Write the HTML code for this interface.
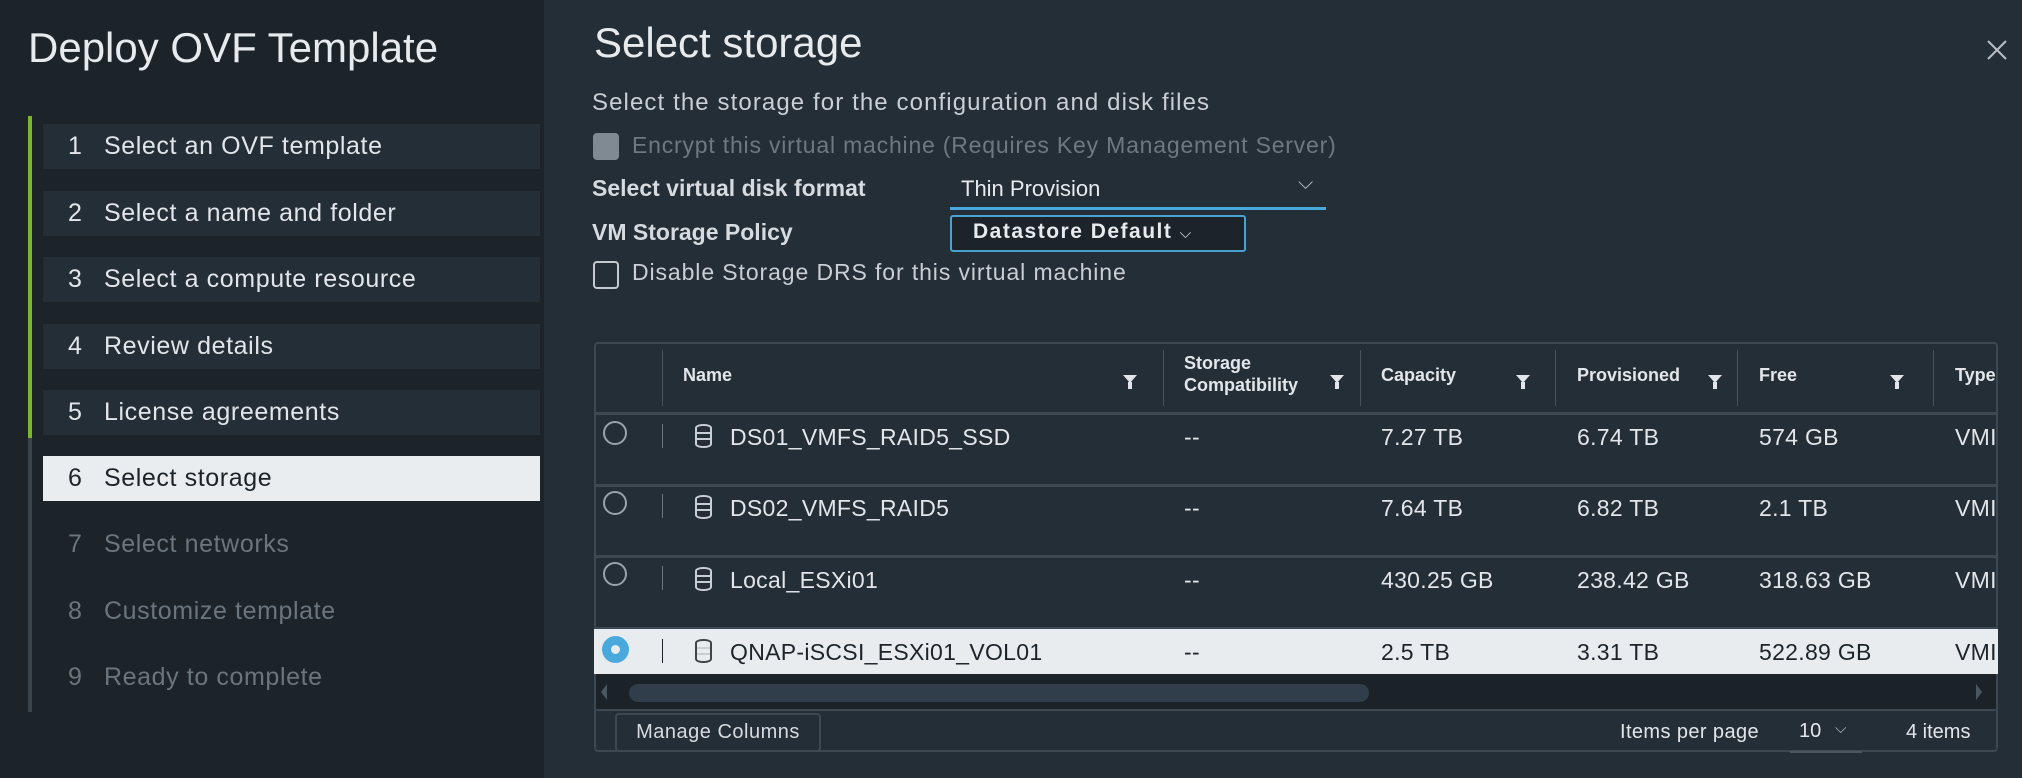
<!DOCTYPE html>
<html><head><meta charset="utf-8"><style>
*{margin:0;padding:0;box-sizing:border-box}
body{width:2022px;height:778px;overflow:hidden;background:#242e36;font-family:"Liberation Sans",sans-serif;color:#e2e6ea;position:relative}
.a{position:absolute;white-space:nowrap}
#side{position:absolute;left:0;top:0;width:544px;height:778px;background:#1c242a}
.step{position:absolute;left:43px;width:497px;height:45px;background:#242e37;font-size:25px;letter-spacing:0.6px;line-height:45px;color:#e2e6ea}
.step .n{position:absolute;left:25px}
.step .t{position:absolute;left:61px}
.step.dis{background:none;color:#6b757d}
.step.sel{background:#e9edf0;color:#1c242a}
.hd{font-weight:bold;font-size:18px;color:#e2e6ea}
.cell{font-size:23px;letter-spacing:0.3px}
.sel2{color:#1c242a}
.vl{position:absolute;width:1px;background:#46525c}
.hl{position:absolute;left:594px;width:1404px;height:3px;background:#3d4852}
.radio{position:absolute;width:24px;height:24px;border:2px solid #9aa3aa;border-radius:50%}
.filt{position:absolute;width:0;height:0;border-left:7px solid transparent;border-right:7px solid transparent;border-top:8px solid #e2e6ea}
.filt:after{content:"";position:absolute;left:-2px;top:-1px;width:4px;height:7px;background:#e2e6ea}
.db{position:absolute;width:17px;height:24px;border:2px solid #c8ced3;border-radius:8px/4px}
.db:before,.db:after{content:"";position:absolute;left:0;right:0;height:2px;background:#c8ced3}
.db:before{top:6px}.db:after{top:12px}
</style></head><body>
<div id="side">
<div class="a" style="left:28px;top:24px;font-size:42px;color:#e8ebee">Deploy OVF Template</div>
<div class="a" style="left:28px;top:116px;width:4px;height:322px;background:#79b72c"></div>
<div class="a" style="left:28px;top:438px;width:4px;height:274px;background:#3a444c"></div>
<div class="step" style="top:124px"><span class="n">1</span><span class="t">Select an OVF template</span></div>
<div class="step" style="top:191px"><span class="n">2</span><span class="t">Select a name and folder</span></div>
<div class="step" style="top:257px"><span class="n">3</span><span class="t">Select a compute resource</span></div>
<div class="step" style="top:324px"><span class="n">4</span><span class="t">Review details</span></div>
<div class="step" style="top:390px"><span class="n">5</span><span class="t">License agreements</span></div>
<div class="step sel" style="top:456px"><span class="n">6</span><span class="t">Select storage</span></div>
<div class="step dis" style="top:522px"><span class="n">7</span><span class="t">Select networks</span></div>
<div class="step dis" style="top:589px"><span class="n">8</span><span class="t">Customize template</span></div>
<div class="step dis" style="top:655px"><span class="n">9</span><span class="t">Ready to complete</span></div>
</div>
<div class="a" style="left:594px;top:19px;font-size:42px;color:#e8ebee">Select storage</div>
<svg class="a" style="left:1987px;top:40px" width="20" height="20" viewBox="0 0 20 20"><path d="M1 1L19 19M19 1L1 19" stroke="#b8c0c6" stroke-width="2"/></svg>
<div class="a" style="left:592px;top:89px;font-size:24px;letter-spacing:1.1px;color:#c9cfd4">Select the storage for the configuration and disk files</div>
<div class="a" style="left:593px;top:133px;width:26px;height:27px;background:#808a92;border-radius:4px"></div>
<div class="a" style="left:632px;top:132px;font-size:23px;letter-spacing:0.8px;color:#6e787f">Encrypt this virtual machine (Requires Key Management Server)</div>
<div class="a" style="left:592px;top:175px;font-size:23px;font-weight:bold;color:#d6dbdf">Select virtual disk format</div>
<div class="a" style="left:961px;top:176px;font-size:22px;color:#e8ebee">Thin Provision</div>
<div class="a" style="left:1298px;top:172px;font-size:20px;color:#b8c0c6">⌵</div>
<div class="a" style="left:950px;top:207px;width:376px;height:3px;background:#49a9dd"></div>
<div class="a" style="left:592px;top:219px;font-size:23px;color:#d6dbdf;font-weight:bold">VM Storage Policy</div>
<div class="a" style="left:950px;top:215px;width:296px;height:37px;border:2px solid #49a2d4;border-radius:3px;background:#1c242a"></div>
<div class="a" style="left:973px;top:220px;font-size:21px;font-weight:bold;letter-spacing:1.5px;color:#e8ebee">Datastore Default <span style="font-size:15px;font-weight:normal">⌵</span></div>
<div class="a" style="left:593px;top:261px;width:26px;height:28px;border:2px solid #c3c9ce;border-radius:4px"></div>
<div class="a" style="left:632px;top:259px;font-size:23px;letter-spacing:0.9px;color:#c9cfd4">Disable Storage DRS for this virtual machine</div>

<div class="a" style="left:594px;top:342px;width:1404px;height:410px;border:2px solid #3d4852;border-radius:4px"></div>
<div class="hl" style="top:412px"></div>
<div class="hl" style="top:484px"></div>
<div class="hl" style="top:555px"></div>
<div class="hl" style="top:627px"></div>
<div class="a" style="left:594px;top:629px;width:1404px;height:45px;background:#e8ecef"></div>
<div class="a" style="left:596px;top:674px;width:1400px;height:35px;background:#1b2329"></div>
<div class="a" style="left:629px;top:684px;width:740px;height:18px;background:#2f3e4a;border-radius:9px"></div>
<div class="a" style="left:601px;top:684px;border-top:8px solid transparent;border-bottom:8px solid transparent;border-right:6px solid #4a5660"></div>
<div class="a" style="left:1976px;top:684px;border-top:8px solid transparent;border-bottom:8px solid transparent;border-left:6px solid #4a5660"></div>
<div class="hl" style="top:709px;height:2px"></div>
<div class="vl" style="left:662px;top:350px;height:56px"></div>
<div class="vl" style="left:1163px;top:350px;height:56px"></div>
<div class="vl" style="left:1360px;top:350px;height:56px"></div>
<div class="vl" style="left:1555px;top:350px;height:56px"></div>
<div class="vl" style="left:1737px;top:350px;height:56px"></div>
<div class="vl" style="left:1933px;top:350px;height:56px"></div>
<div class="a hd" style="left:683px;top:365px">Name</div>
<div class="a hd" style="left:1184px;top:352px;line-height:22px">Storage<br>Compatibility</div>
<div class="a hd" style="left:1381px;top:365px">Capacity</div>
<div class="a hd" style="left:1577px;top:365px">Provisioned</div>
<div class="a hd" style="left:1759px;top:365px">Free</div>
<div class="a hd" style="left:1955px;top:365px">Type</div>
<div class="filt" style="left:1123px;top:375px"></div>
<div class="filt" style="left:1330px;top:375px"></div>
<div class="filt" style="left:1516px;top:375px"></div>
<div class="filt" style="left:1708px;top:375px"></div>
<div class="filt" style="left:1890px;top:375px"></div>

<div class="radio" style="left:603px;top:421px"></div>
<div class="vl" style="left:662px;top:424px;height:24px;background:#6a747c"></div>
<div class="db" style="left:695px;top:424px"></div>
<div class="a cell" style="left:730px;top:424px">DS01_VMFS_RAID5_SSD</div>
<div class="a cell" style="left:1184px;top:424px">--</div>
<div class="a cell" style="left:1381px;top:424px">7.27 TB</div>
<div class="a cell" style="left:1577px;top:424px">6.74 TB</div>
<div class="a cell" style="left:1759px;top:424px">574 GB</div>
<div class="a cell" style="left:1955px;top:424px">VMI</div>

<div class="radio" style="left:603px;top:491px"></div>
<div class="vl" style="left:662px;top:494px;height:24px;background:#6a747c"></div>
<div class="db" style="left:695px;top:495px"></div>
<div class="a cell" style="left:730px;top:495px">DS02_VMFS_RAID5</div>
<div class="a cell" style="left:1184px;top:495px">--</div>
<div class="a cell" style="left:1381px;top:495px">7.64 TB</div>
<div class="a cell" style="left:1577px;top:495px">6.82 TB</div>
<div class="a cell" style="left:1759px;top:495px">2.1 TB</div>
<div class="a cell" style="left:1955px;top:495px">VMI</div>

<div class="radio" style="left:603px;top:562px"></div>
<div class="vl" style="left:662px;top:566px;height:24px;background:#6a747c"></div>
<div class="db" style="left:695px;top:567px"></div>
<div class="a cell" style="left:730px;top:567px">Local_ESXi01</div>
<div class="a cell" style="left:1184px;top:567px">--</div>
<div class="a cell" style="left:1381px;top:567px">430.25 GB</div>
<div class="a cell" style="left:1577px;top:567px">238.42 GB</div>
<div class="a cell" style="left:1759px;top:567px">318.63 GB</div>
<div class="a cell" style="left:1955px;top:567px">VMI</div>

<div class="a" style="left:602px;top:636px;width:27px;height:27px;border-radius:50%;background:#49a9dd"><div style="position:absolute;left:9px;top:9px;width:9px;height:9px;border-radius:50%;background:#e8ecef"></div></div>
<div class="vl" style="left:662px;top:639px;height:24px;background:#1c242a"></div>
<div class="db" style="left:695px;top:639px;border-color:#444"></div>
<div class="a cell sel2" style="left:730px;top:639px">QNAP-iSCSI_ESXi01_VOL01</div>
<div class="a cell sel2" style="left:1184px;top:639px">--</div>
<div class="a cell sel2" style="left:1381px;top:639px">2.5 TB</div>
<div class="a cell sel2" style="left:1577px;top:639px">3.31 TB</div>
<div class="a cell sel2" style="left:1759px;top:639px">522.89 GB</div>
<div class="a cell sel2" style="left:1955px;top:639px">VMI</div>

<div class="a" style="left:615px;top:713px;width:206px;height:39px;border:2px solid #3d4852;border-radius:4px;font-size:20px;line-height:35px;text-align:center;color:#d6dbdf;letter-spacing:0.5px">Manage Columns</div>
<div class="a" style="left:1620px;top:721px;font-size:20px;letter-spacing:0.4px;color:#e2e6ea">Items per page</div>
<div class="a" style="left:1799px;top:720px;font-size:20px;color:#e2e6ea">10</div>
<div class="a" style="left:1835px;top:720px;font-size:15px;color:#b8c0c6">⌵</div>
<div class="a" style="left:1790px;top:751px;width:72px;height:2px;background:#4a5660"></div>
<div class="a" style="left:1906px;top:721px;font-size:20px;color:#e2e6ea">4 items</div>
</body></html>
